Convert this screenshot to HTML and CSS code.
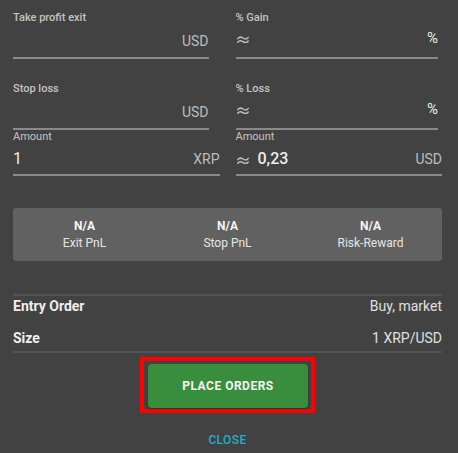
FILE: index.html
```html
<!DOCTYPE html>
<html lang="en">
<head>
<meta charset="utf-8">
<title>Place orders</title>
<link rel="stylesheet" href="styles.css">
</head>
<body>
<div class="panel">
  <div class="fields">
    <div class="field gap narrow-l">
      <div class="label">Take profit exit</div>
      <div class="input"><span class="unit">USD</span></div>
    </div>
    <div class="field gap narrow-r">
      <div class="label">% Gain</div>
      <div class="input"><svg class="approx" viewBox="0 0 12 7" aria-label="≈"><path d="M0.8 2.6 C2.3 0.6 3.8 0.6 5.9 2 S9.7 3.4 11.2 1.4 M0.8 6.2 C2.3 4.2 3.8 4.2 5.9 5.6 S9.7 7 11.2 5"/></svg><span class="pct">%</span></div>
    </div>
    <div class="field narrow-l">
      <div class="label">Stop loss</div>
      <div class="input"><span class="unit">USD</span></div>
    </div>
    <div class="field narrow-r">
      <div class="label">% Loss</div>
      <div class="input"><svg class="approx" viewBox="0 0 12 7" aria-label="≈"><path d="M0.8 2.6 C2.3 0.6 3.8 0.6 5.9 2 S9.7 3.4 11.2 1.4 M0.8 6.2 C2.3 4.2 3.8 4.2 5.9 5.6 S9.7 7 11.2 5"/></svg><span class="pct">%</span></div>
    </div>
    <div class="field">
      <div class="label light">Amount</div>
      <div class="input tall"><span class="value">1</span><span class="unit">XRP</span></div>
    </div>
    <div class="field">
      <div class="label light">Amount</div>
      <div class="input tall"><svg class="approx lower" viewBox="0 0 12 7" aria-label="≈"><path d="M0.8 2.6 C2.3 0.6 3.8 0.6 5.9 2 S9.7 3.4 11.2 1.4 M0.8 6.2 C2.3 4.2 3.8 4.2 5.9 5.6 S9.7 7 11.2 5"/></svg><span class="value strong">0,23</span><span class="unit">USD</span></div>
    </div>
  </div>

  <div class="stats">
    <div class="stat"><div class="stat-v">N/A</div><div class="stat-l">Exit PnL</div></div>
    <div class="stat"><div class="stat-v">N/A</div><div class="stat-l">Stop PnL</div></div>
    <div class="stat"><div class="stat-v">N/A</div><div class="stat-l">Risk-Reward</div></div>
  </div>

  <div class="summary">
    <div class="row"><span class="key">Entry Order</span><span class="val">Buy, market</span></div>
    <div class="row"><span class="key">Size</span><span class="val">1 XRP/USD</span></div>
  </div>

  <div class="actions">
    <div class="highlight"><button class="btn">PLACE ORDERS</button></div>
    <button class="close">CLOSE</button>
  </div>
</div>
</body>
</html>
```

FILE: styles.css
```css
html, body {
  margin: 0;
  background: #424242;
  font-family: Roboto, "Liberation Sans", sans-serif;
}

.panel {
  padding: 11px 16px 0 13px;
}

.fields {
  display: grid;
  grid-template-columns: 1fr 1fr;
  column-gap: 16px;
}

.field {
  border-bottom: 2px solid #8a8a8a;
}

.field.gap {
  margin-bottom: 23px;
}

.field.narrow-l {
  margin-right: 11px;
}

.field.narrow-r {
  margin-right: 4px;
}

.label {
  font-size: 11px;
  line-height: 13px;
  height: 13px;
  color: #c4c4c4;
  font-weight: 500;
}

.label.light {
  font-weight: 400;
}

.input {
  display: flex;
  align-items: baseline;
  height: 20px;
  line-height: 20px;
  padding: 7px 0 6px;
}

.input.tall {
  padding: 6px 0 5px;
}

.unit {
  margin-left: auto;
  font-size: 14px;
  color: #bdbdbd;
}

.pct {
  margin-left: auto;
  font-size: 15px;
  line-height: 15px;
  color: #ededed;
}

.approx {
  width: 12px;
  height: 7px;
  margin: 0 0 0 1px;
  fill: none;
  stroke: #bdbdbd;
  stroke-width: 1.5;
  stroke-linecap: round;
}

.approx.lower {
  margin-bottom: 2px;
}

.value {
  font-size: 16px;
  color: #ededed;
}

.value.strong {
  font-weight: 500;
  margin-left: 9px;
}

.stats {
  margin-top: 32px;
  background: #616161;
  border-radius: 3px;
  display: grid;
  grid-template-columns: repeat(3, 1fr);
  padding: 10px 0 9px;
  text-align: center;
}

.stat-v {
  font-size: 12px;
  line-height: 16px;
  font-weight: 700;
  color: #f5f5f5;
}

.stat-l {
  font-size: 12px;
  line-height: 18px;
  color: #e6e6e6;
}

.summary {
  margin-top: 33px;
  border-top: 2px solid #535353;
  border-bottom: 2px solid #535353;
  padding-bottom: 3px;
}

.row {
  display: flex;
  justify-content: space-between;
  font-size: 14px;
  line-height: 20px;
}

.row + .row {
  margin-top: 12px;
}

.key {
  font-weight: 700;
  color: #eeeeee;
}

.val {
  color: #e0e0e0;
}

.actions {
  display: flex;
  flex-direction: column;
  align-items: center;
  margin-top: 4px;
}

.highlight {
  border: 4px solid #ff0000;
  padding: 3px 3px 1px 4px;
}

.btn {
  display: block;
  width: 160px;
  height: 44px;
  padding: 0;
  border: 0;
  border-radius: 4px;
  background: #388e3c;
  color: #f5f5f5;
  font-family: Roboto, "Liberation Sans", sans-serif;
  font-size: 12px;
  font-weight: 700;
  letter-spacing: 0.5px;
  box-shadow: 0 1px 2px rgba(0, 0, 0, 0.3);
}

.close {
  margin-top: 19px;
  padding: 0;
  border: 0;
  background: none;
  color: #1fb0cc;
  font-family: Roboto, "Liberation Sans", sans-serif;
  font-size: 12px;
  line-height: 16px;
  font-weight: 500;
  letter-spacing: 0.4px;
}
```
